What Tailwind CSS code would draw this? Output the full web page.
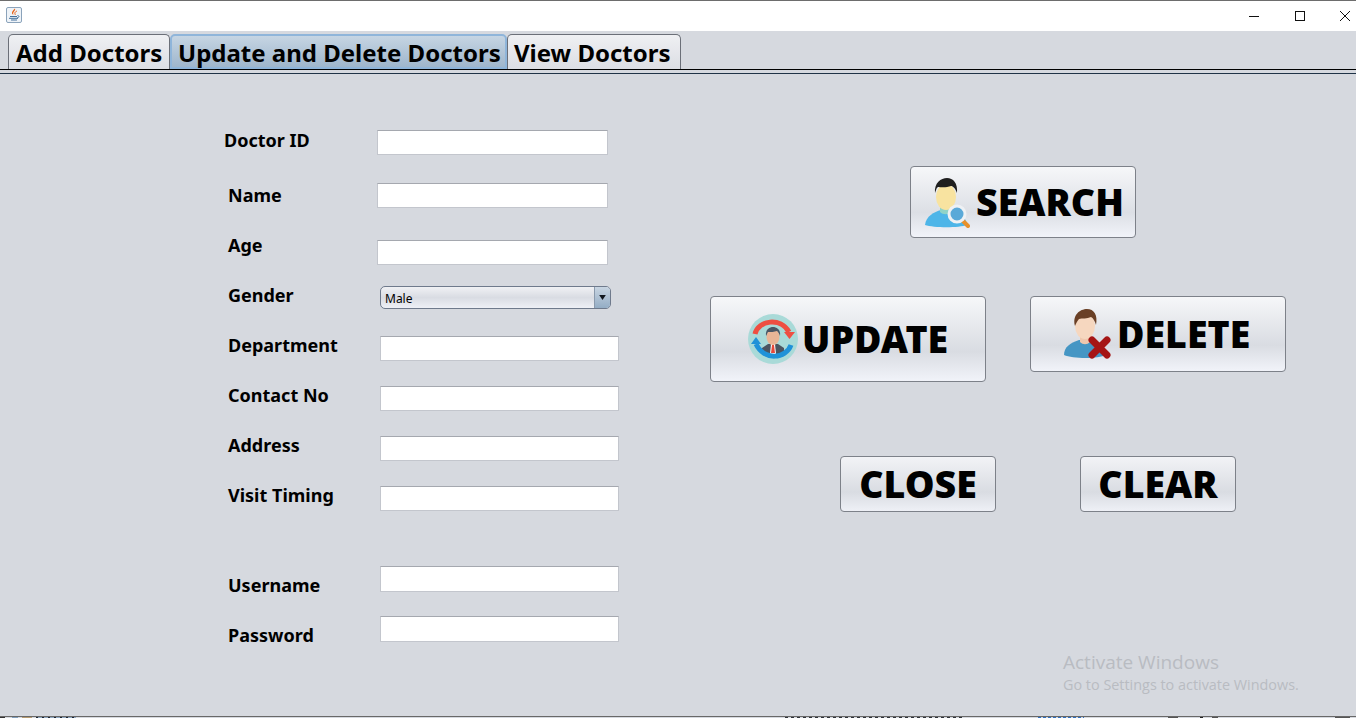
<!DOCTYPE html>
<html lang="en">

<head>
    <meta charset="UTF-8">
    <meta name="viewport" content="width=device-width, initial-scale=1.0">
    <title>Update and Delete Doctors</title>
    <script src="https://cdn.jsdelivr.net/npm/@tailwindcss/browser@4"></script>
</head>

<body class="font-['Noto_Sans',sans-serif] bg-[#d6d9df] text-black">
    <div class="relative w-[1356px] h-[718px] overflow-hidden flex flex-col bg-[#d6d9df]">

        <!-- Window title bar -->
        <div class="h-[31px] shrink-0 bg-white border-t border-[#6d6d6d] flex items-center justify-between pl-[6px] pr-[5px]">
            <svg class="w-[16px] h-[16px] -mt-[2px]" viewBox="0 0 16 16">
                <rect x="0.5" y="0.5" width="15" height="15" rx="1.5" fill="#eef3f8" stroke="#8ba3bb" />
                <path d="M9 1.500c1 2.500-3 3.500-1.500 6.500 -3-1.500-1-4.500 1.500-6.500z" fill="#e8641a" />
                <path d="M11 4c-2.500 1-2.500 2.500-1.500 4" stroke="#e8641a" fill="none" />
                <path d="M4 9.500h7M3 11.300h9M5 13h6" stroke="#44719c" />
                <path d="M11.500 8.500c2 0 2 2-0.500 2.500" stroke="#44719c" fill="none" />
            </svg>
            <div class="flex items-center">
                <svg class="w-[12px] h-[12px] mr-[34px]" viewBox="0 0 12 12"><path d="M1 6.500h10" stroke="#111" /></svg>
                <svg class="w-[12px] h-[12px] mr-[33px]" viewBox="0 0 12 12"><rect x="1.500" y="1.500" width="9" height="9" fill="none" stroke="#111" /></svg>
                <svg class="w-[12px] h-[12px]" viewBox="0 0 12 12"><path d="M1 1l10 10M11 1L1 11" stroke="#111" /></svg>
            </div>
        </div>

        <!-- Tabs -->
        <div class="h-[43px] shrink-0 relative">
            <div class="flex pl-[8px] pt-[3px] h-[39px] border-b border-black">
                <div class="w-[162px] h-[35px] rounded-t-[5px] border border-b-0 border-[#6b6f78] bg-linear-to-b from-[#eff0f3] to-[#dcdee4] pl-[7px] text-[24px] leading-[36px] font-bold whitespace-nowrap">Add Doctors</div>
                <div class="w-[337px] h-[35px] rounded-t-[5px] border-2 border-b-2 border-[#8fb5da] bg-linear-to-b from-[#c6d5e3] to-[#9fb6cc] pl-[6px] text-[24px] leading-[34px] font-bold whitespace-nowrap">Update and Delete Doctors</div>
                <div class="w-[174px] h-[35px] rounded-t-[5px] border border-b-0 border-[#6b6f78] bg-linear-to-b from-[#eff0f3] to-[#dcdee4] pl-[6px] text-[24px] leading-[36px] font-bold whitespace-nowrap">View Doctors</div>
            </div>
            <div class="h-[4px] border-b border-[#1f3347] bg-[#d6d9df]"></div>
        </div>

        <div class="flex flex-1">
            <!-- Form -->
            <form class="w-[486px] ml-[224px] pt-[56px] text-[18px] font-bold">
                <div class="flex h-[25px]">
                    <label class="w-[153px] leading-[20px]">Doctor ID</label>
                    <input type="text" class="w-[231px] h-[25px] bg-white border border-[#c3c6cd] border-t-[#a5a8af]">
                </div>
                <div class="flex h-[25px] mt-[28px]">
                    <label class="w-[149px] ml-[4px] leading-[24px]">Name</label>
                    <input type="text" class="w-[231px] h-[25px] bg-white border border-[#c3c6cd] border-t-[#a5a8af]">
                </div>
                <div class="flex h-[25px] mt-[32px]">
                    <label class="w-[149px] ml-[4px] leading-[25px] -mt-[7px]">Age</label>
                    <input type="text" class="w-[231px] h-[25px] bg-white border border-[#c3c6cd] border-t-[#a5a8af]">
                </div>
                <div class="flex h-[23px] mt-[21px]">
                    <label class="w-[152px] ml-[4px] leading-[18px]">Gender</label>
                    <div class="relative w-[231px] h-[23px] rounded-[5px] border border-[#6f7a8c] bg-linear-to-b from-[#f0f1f4] via-[#d9dce3] to-[#eef0f6] pl-[4px] text-[12px] leading-[23px] font-normal">
                        Male
                        <div class="absolute right-0 top-0 w-[16px] h-[21px] rounded-r-[4px] border-l border-[#8a9aad] bg-linear-to-b from-[#c8d5e2] to-[#94adc5] flex items-center justify-center">
                            <svg class="w-[7px] h-[5px]" viewBox="0 0 8 6"><path d="M0 0h8L4 6z" fill="#10161e" /></svg>
                        </div>
                    </div>
                </div>
                <div class="flex h-[25px] mt-[27px]">
                    <label class="w-[152px] ml-[4px] leading-[19px]">Department</label>
                    <input type="text" class="w-[239px] h-[25px] bg-white border border-[#c3c6cd] border-t-[#a5a8af]">
                </div>
                <div class="flex h-[25px] mt-[25px]">
                    <label class="w-[152px] ml-[4px] leading-[19px]">Contact No</label>
                    <input type="text" class="w-[239px] h-[25px] bg-white border border-[#c3c6cd] border-t-[#a5a8af]">
                </div>
                <div class="flex h-[25px] mt-[25px]">
                    <label class="w-[152px] ml-[4px] leading-[19px]">Address</label>
                    <input type="text" class="w-[239px] h-[25px] bg-white border border-[#c3c6cd] border-t-[#a5a8af]">
                </div>
                <div class="flex h-[25px] mt-[25px]">
                    <label class="w-[152px] ml-[4px] leading-[19px]">Visit Timing</label>
                    <input type="text" class="w-[239px] h-[25px] bg-white border border-[#c3c6cd] border-t-[#a5a8af]">
                </div>
                <div class="flex h-[26px] mt-[55px]">
                    <label class="w-[152px] ml-[4px] leading-[38px]">Username</label>
                    <input type="text" class="w-[239px] h-[26px] bg-white border border-[#c3c6cd] border-t-[#a5a8af]">
                </div>
                <div class="flex h-[26px] mt-[24px]">
                    <label class="w-[152px] ml-[4px] leading-[38px]">Password</label>
                    <input type="password" class="w-[239px] h-[26px] bg-white border border-[#c3c6cd] border-t-[#a5a8af]">
                </div>
            </form>

            <!-- Buttons -->
            <div class="pt-[92px] text-[37.5px] font-black">
                <button type="button" class="ml-[200px] w-[226px] h-[72px] flex items-center pl-[14px] rounded-[4px] border border-[#7d8189] bg-[linear-gradient(#f6f7f9,#dcdfe5_65%,#f1f3f9)]">
                    <svg class="w-[45px] h-[51px] mr-[6px] shrink-0" viewBox="0 0 45 51">
                        <path d="M0 48c1-9 9-13 16-15h10c7 2 15 6 16 15-8 3-33 3-42 0z" fill="#4db5e8" />
                        <path d="M15 30h11v5c-3 3-8 3-11 0z" fill="#8fd3c8" />
                        <ellipse cx="21" cy="20" rx="10" ry="13" fill="#f8e3a0" />
                        <path d="M10 16c-1-10 6-15 12-15s11 5 10 15c-2-5-4-7-6-7-5 2-11 1-13 1-2 1-2 4-3 6z" fill="#1f1f1f" />
                        <path d="M36 42l7 7" stroke="#e8902a" stroke-width="4" stroke-linecap="round" />
                        <circle cx="32" cy="37" r="8" fill="#5aa9d8" stroke="#eef1f4" stroke-width="3" />
                    </svg>
                    <span class="leading-none">SEARCH</span>
                </button>

                <div class="flex items-start mt-[58px]">
                    <button type="button" class="w-[276px] h-[86px] flex items-center pl-[37px] rounded-[4px] border border-[#7d8189] bg-[linear-gradient(#f6f7f9,#d9dce2_65%,#f1f3f9)]">
                        <svg class="w-[50px] h-[50px] mr-[4px] shrink-0" viewBox="0 0 50 50">
                            <circle cx="25" cy="25" r="25" fill="#a9dad8" />
                            <path d="M20 30h10l6 4v6c-6 5-16 5-22 0v-6z" fill="#4c5560" />
                            <path d="M23 30h4l1 10h-6z" fill="#fff" />
                            <path d="M24 31h2l1 8h-4z" fill="#e8483a" />
                            <ellipse cx="25" cy="23" rx="6.500" ry="8" fill="#e9b596" />
                            <path d="M18 22c-1-7 4-9 7-9s8 2 7 9c-1-3-2-4-3-5-3 1-6 1-9 1-1 1-1 3-2 4z" fill="#4a5664" />
                            <path d="M7 20C10 6 33 3 41 18" fill="none" stroke="#ee4f42" stroke-width="5" />
                            <path d="M36 18h11l-5.500 7z" fill="#ee4f42" />
                            <path d="M43 31C38 45 16 47 8 30" fill="none" stroke="#1f92d8" stroke-width="5" />
                            <path d="M3 30h10l-5-7z" fill="#1f92d8" />
                        </svg>
                        <span class="leading-none">UPDATE</span>
                    </button>
                    <button type="button" class="ml-[44px] w-[256px] h-[76px] flex items-center pl-[33px] rounded-[4px] border border-[#7d8189] bg-[linear-gradient(#f6f7f9,#d9dce2_65%,#f1f3f9)]">
                        <svg class="w-[48px] h-[50px] mr-[5px] shrink-0" viewBox="0 0 48 50">
                            <path d="M0 46c0-8 6-12 15-15h12c8 2 14 7 15 15-8 4-33 4-42 0z" fill="#4596c4" />
                            <path d="M16 28h10v5c-3 3-7 3-10 0z" fill="#efc8ae" />
                            <ellipse cx="21" cy="17" rx="10" ry="13" fill="#f6d7bf" />
                            <path d="M11 17C8 6 16 0 23 0c7 0 11 6 9 16-1-4-3-7-5-8-4 2-9 1-12 2-2 2-3 5-4 7z" fill="#6a4026" />
                            <path d="M28 31l15 15M43 31L28 46" stroke="#a51515" stroke-width="7" stroke-linecap="round" />
                        </svg>
                        <span class="leading-none">DELETE</span>
                    </button>
                </div>

                <div class="flex mt-[74px] ml-[130px]">
                    <button type="button" class="w-[156px] h-[56px] rounded-[4px] border border-[#7d8189] bg-[linear-gradient(#f2f3f6,#d9dce2_65%,#eef0f6)] leading-none">CLOSE</button>
                    <button type="button" class="ml-[84px] w-[156px] h-[56px] rounded-[4px] border border-[#7d8189] bg-[linear-gradient(#f2f3f6,#d9dce2_65%,#eef0f6)] leading-none">CLEAR</button>
                </div>
            </div>
        </div>

        <!-- Windows activation watermark -->
        <div class="absolute left-[1063px] top-[650px] font-['Open_Sans',sans-serif] text-[#b9bcc2]">
            <p class="text-[19px] leading-[25px]">Activate Windows</p>
            <p class="text-[14.4px] leading-[20px]">Go to Settings to activate Windows.</p>
        </div>

        <!-- Sliver of the desktop taskbar at the bottom edge -->
        <div class="absolute left-0 bottom-0 w-full h-[2px] bg-[#d6d9df] border-t border-[#686868]">
            <div class="absolute left-0 top-0 w-[5px] h-[1px] bg-[#333]"></div>
            <div class="absolute left-[12px] top-0 w-[6px] h-[1px] bg-[#7f9dbb]"></div>
            <div class="absolute left-[22px] top-0 w-[10px] h-[1px] bg-[#b59a70]"></div>
            <div class="absolute left-[36px] top-0 w-[40px] h-[1px] bg-[repeating-linear-gradient(90deg,#1d2633_0_2px,#8ea6bf_2px_6px)]"></div>
            <div class="absolute left-[785px] top-0 w-[180px] h-[1px] bg-[repeating-linear-gradient(90deg,#30343a_0_3px,transparent_3px_6px)]"></div>
            <div class="absolute left-[1038px] top-0 w-[46px] h-[1px] bg-[repeating-linear-gradient(90deg,#2f6fc0_0_3px,transparent_3px_5px)]"></div>
            <div class="absolute left-[1168px] top-0 w-[10px] h-[1px] bg-[#555]"></div>
            <div class="absolute left-[1200px] top-0 w-[3px] h-[1px] bg-[#222]"></div>
            <div class="absolute left-[1212px] top-0 w-[6px] h-[1px] bg-[#555]"></div>
            <div class="absolute left-[1335px] top-0 w-[15px] h-[1px] bg-[#555]"></div>
        </div>
    </div>
</body>

</html>
